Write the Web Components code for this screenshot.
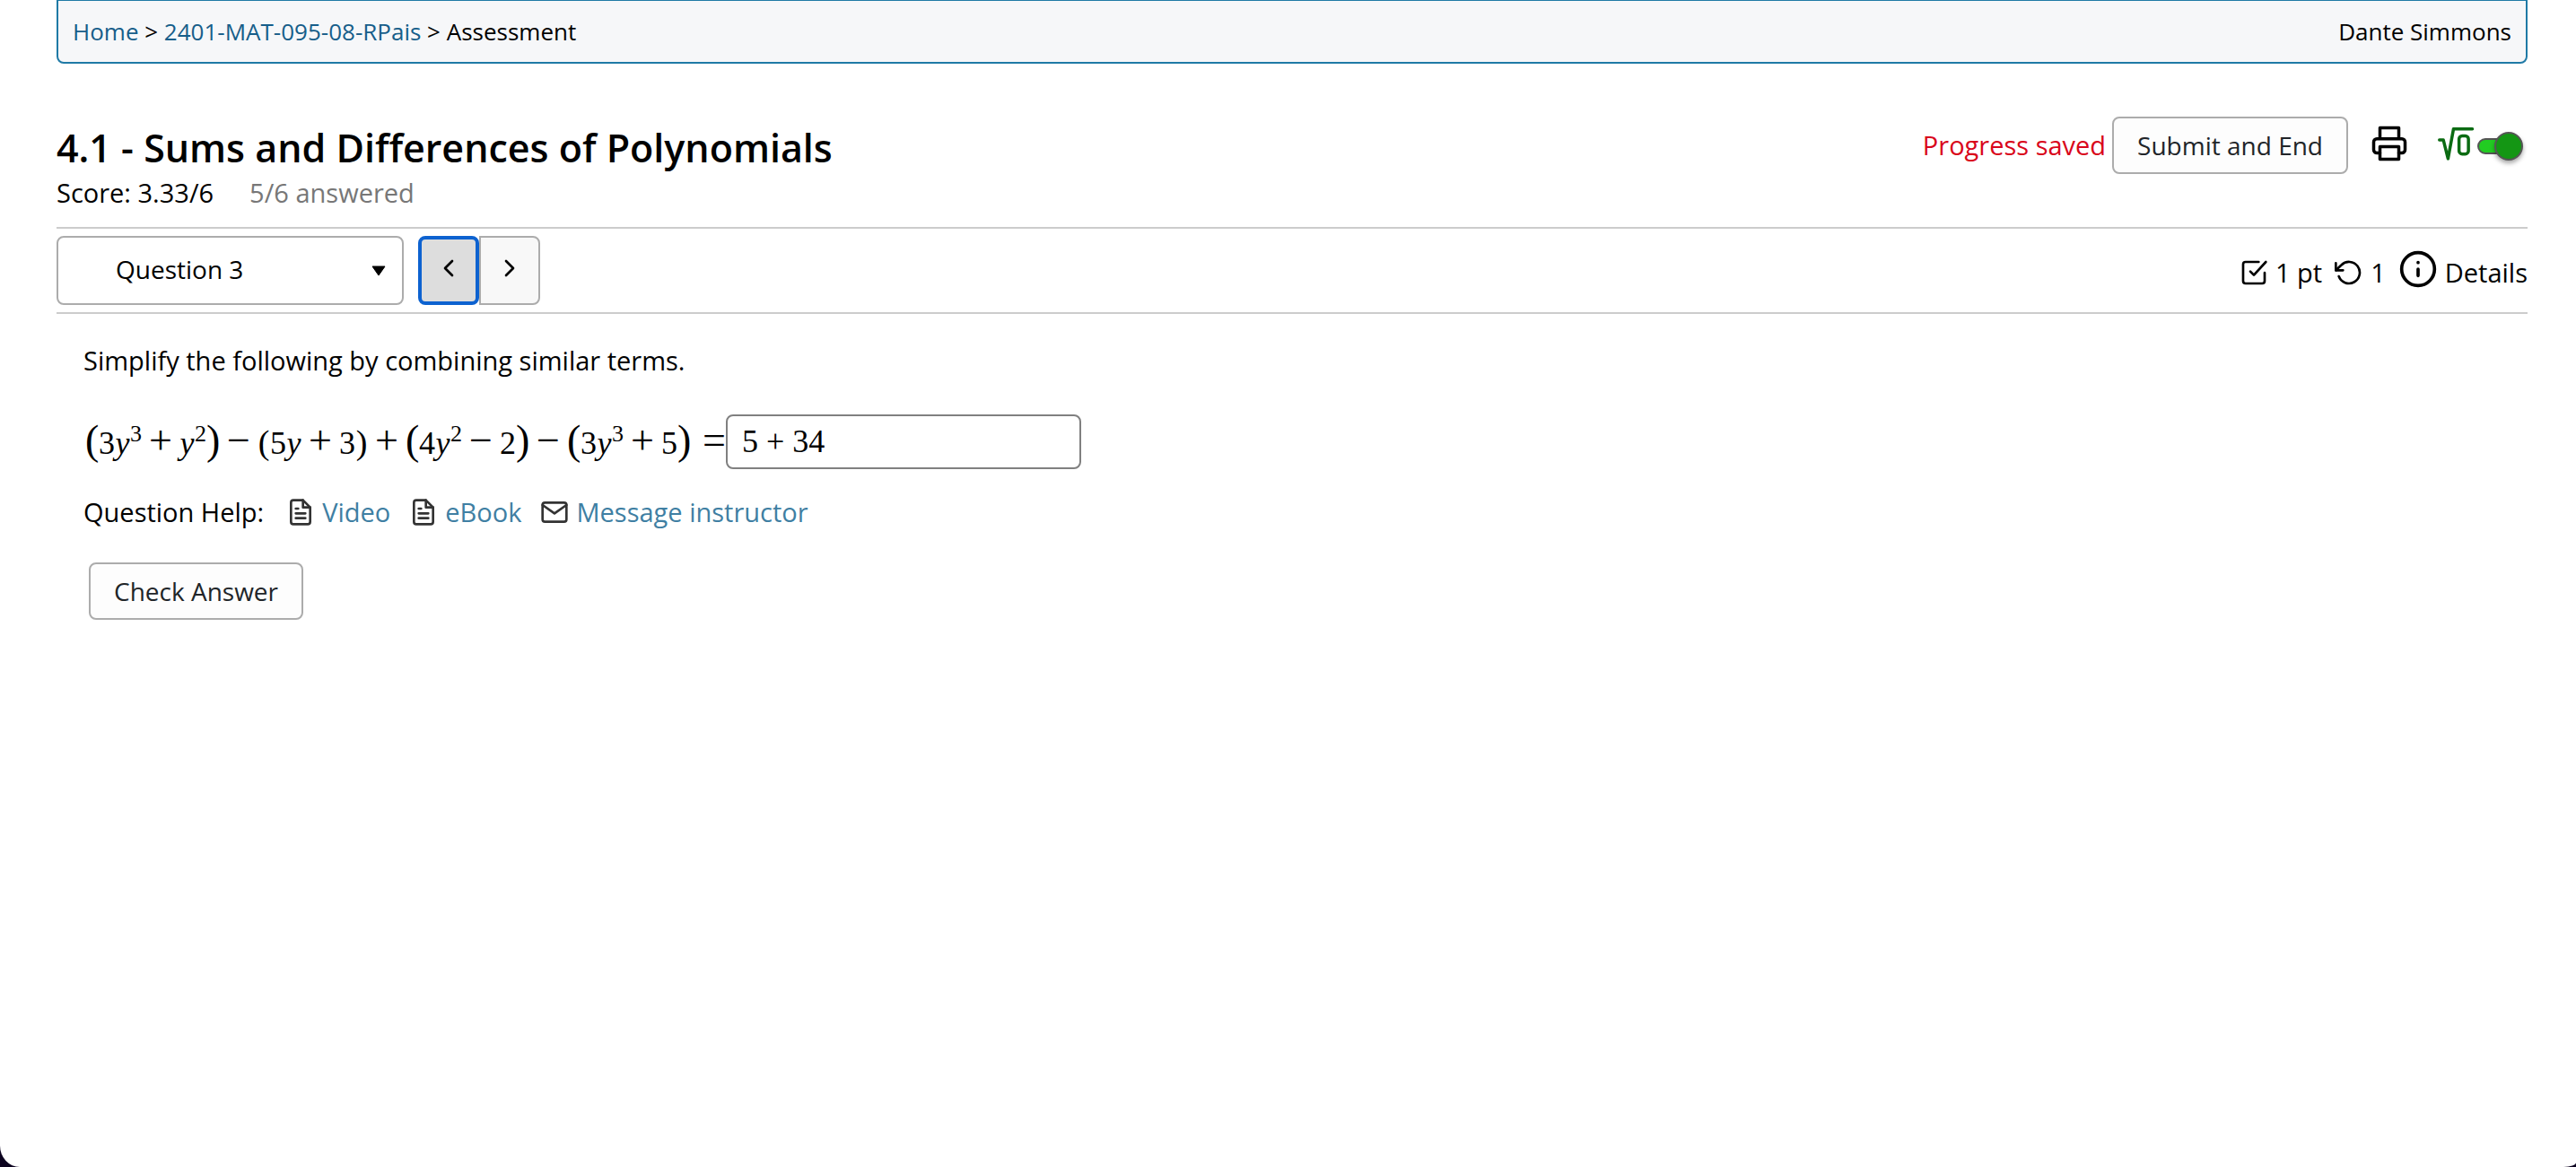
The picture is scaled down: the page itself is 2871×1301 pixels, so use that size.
<!DOCTYPE html>
<html lang="en">
<head>
<meta charset="utf-8">
<title>4.1 - Sums and Differences of Polynomials</title>
<style>
  html {
    background: #0d0420;
  }
  body {
    margin: 0;
    min-height: 100vh;
    box-sizing: border-box;
    padding: 0 54px 0 63px;
    background: #fff;
    border-radius: 0 0 14px 22px / 0 0 5px 24px;
    color: #000;
    font: 500 29px/40px "Open Sans", "Noto Sans", sans-serif;
  }
</style>
</head>
<body>
  <course-crumbs user="Dante Simmons">
    <a href="#home">Home</a> &gt; <a href="#course">2401-MAT-095-08-RPais</a> &gt; Assessment
  </course-crumbs>

  <assess-header>
    <span slot="title">4.1 - Sums and Differences of Polynomials</span>
    <span slot="score">Score: 3.33/6</span>
    <span slot="answered">5/6 answered</span>
    <span slot="status">Progress saved</span>
  </assess-header>

  <question-nav current="3" total="6"></question-nav>

  <question-panel>
    <span slot="prompt">Simplify the following by combining similar terms.</span>
    <math-line slot="math" expr="(3y^3+y^2)-(5y+3)+(4y^2-2)-(3y^3+5)="></math-line>
    <help-link slot="help" icon="file" href="#video">Video</help-link>
    <help-link slot="help" icon="file" href="#ebook">eBook</help-link>
    <help-link slot="help" icon="mail" href="#message">Message instructor</help-link>
  </question-panel>

<script>
const ICONS = {
  printer: '<path d="M6 9V2h12v7M6 18H4a2 2 0 0 1-2-2v-5a2 2 0 0 1 2-2h16a2 2 0 0 1 2 2v5a2 2 0 0 1-2 2h-2"/><path d="M6 14h12v8H6z"/>',
  check: '<path d="M9 11l3 3L22 3"/><path d="M21 12v7a2 2 0 0 1-2 2H5a2 2 0 0 1-2-2V5a2 2 0 0 1 2-2h11"/>',
  retry: '<path d="M1 4v6h6"/><path d="M3.5 15a9 9 0 1 0 2.1-9.4L1 10"/>',
  info: '<circle cx="12" cy="12" r="10"/><path d="M12 16v-4M12 8h.01"/>',
  file: '<path d="M14 2H6a2 2 0 0 0-2 2v16a2 2 0 0 0 2 2h12a2 2 0 0 0 2-2V8z"/><path d="M14 2v6h6M16 13H8M16 17H8M10 9H8"/>',
  mail: '<rect x="2" y="4" width="20" height="16" rx="2"/><path d="M22 6l-10 7L2 6"/>',
  left: '<path d="M15 18l-6-6 6-6"/>',
  right: '<path d="M9 18l6-6-6-6"/>',
  root: '<path d="M1 8.5h2.5l3 12 3.5-19h12"/><rect x="13.5" y="6" width="6" height="11.5" rx="2"/>'
};

class UiIcon extends HTMLElement {
  connectedCallback() {
    this.attachShadow({mode: 'open'});
    this.shadowRoot.innerHTML = `
    <style>
      :host {
        display: inline-flex;
        flex: none;
        width: var(--size, 32px);
        height: var(--size, 32px);
      }
      svg {
        width: 100%;
        height: 100%;
        fill: none;
        stroke: currentColor;
        stroke-width: 2;
        stroke-linecap: round;
        stroke-linejoin: round;
      }
    </style>
    <svg viewBox="0 0 24 24" aria-hidden="true">${ICONS[this.getAttribute('name')]}</svg>`;
  }
}

class UiButton extends HTMLElement {
  connectedCallback() {
    this.attachShadow({mode: 'open'});
    this.shadowRoot.innerHTML = `
    <style>
      :host {
        display: inline-flex;
      }
      button {
        height: 64px;
        padding: 0 26px;
        border: 2px solid #acacac;
        border-radius: 8px;
        background: #fdfdfd;
        color: #212529;
        font: inherit;
        font-size: 28px;
      }
    </style>
    <button type="button"><slot></slot></button>`;
  }
}

class CourseCrumbs extends HTMLElement {
  connectedCallback() {
    this.attachShadow({mode: 'open'});
    this.shadowRoot.innerHTML = `
    <style>
      :host {
        display: flex;
        justify-content: space-between;
        align-items: center;
        box-sizing: border-box;
        height: 71px;
        padding: 0 16px;
        border: 2px solid #1f7aa6;
        border-top-width: 1px;
        border-radius: 0 0 8px 8px;
        background: #f6f7f9;
        font-size: 26px;
      }
      ::slotted(a) {
        color: #165e8a;
        text-decoration: none;
      }
    </style>
    <nav><slot></slot></nav>
    <span>${this.getAttribute('user')}</span>`;
  }
}

class MathToggle extends HTMLElement {
  connectedCallback() {
    this.attachShadow({mode: 'open'});
    this.shadowRoot.innerHTML = `
    <style>
      :host {
        display: flex;
      }
      label {
        display: flex;
        align-items: center;
        color: #0b6b12;
      }
      ui-icon {
        --size: 42px;
      }
      input {
        appearance: none;
        display: flex;
        align-items: center;
        justify-content: flex-end;
        box-sizing: border-box;
        width: 50px;
        height: 18px;
        margin: 2px 6px 0 2px;
        border: 2px solid #555;
        border-radius: 9px;
        background: #22cc22;
      }
      input::before {
        content: "";
        flex: none;
        box-sizing: border-box;
        width: 32px;
        height: 32px;
        margin-right: -3px;
        border: 2px solid #555;
        border-radius: 50%;
        background: #149614;
        box-shadow: 0 3px 5px rgba(0, 0, 0, 0.35);
      }
    </style>
    <label>
      <ui-icon name="root"></ui-icon>
      <input type="checkbox" role="switch" aria-label="Equation editor" checked>
    </label>`;
  }
}

class AssessHeader extends HTMLElement {
  connectedCallback() {
    this.attachShadow({mode: 'open'});
    this.shadowRoot.innerHTML = `
    <style>
      :host {
        display: flex;
        justify-content: space-between;
        align-items: flex-start;
        padding: 59px 0 18px;
        border-bottom: 2px solid #ccc;
      }
      h1 {
        margin: 5px 0 0;
        font-size: 43px;
        font-weight: 600;
        line-height: 60px;
      }
      .score {
        display: flex;
        gap: 40px;
      }
      .answered {
        color: #777;
      }
      .tools {
        display: flex;
        align-items: center;
      }
      .status {
        margin-right: 7px;
        color: #d9061b;
      }
      .print {
        display: flex;
        margin: 0 33px 0 25px;
        padding: 0 0 4px;
        border: 0;
        background: none;
        color: #000;
        --size: 42px;
      }
    </style>
    <div>
      <h1><slot name="title"></slot></h1>
      <div class="score">
        <slot name="score"></slot>
        <span class="answered"><slot name="answered"></slot></span>
      </div>
    </div>
    <div class="tools">
      <span class="status"><slot name="status"></slot></span>
      <ui-button>Submit and End</ui-button>
      <button class="print" type="button" aria-label="Print"><ui-icon name="printer"></ui-icon></button>
      <math-toggle></math-toggle>
    </div>`;
  }
}

class QuestionNav extends HTMLElement {
  connectedCallback() {
    const current = Number(this.getAttribute('current'));
    const total = Number(this.getAttribute('total'));
    let options = '';
    for (let i = 1; i <= total; i++) {
      options += `<option${i === current ? ' selected' : ''}>Question ${i}</option>`;
    }
    this.attachShadow({mode: 'open'});
    this.shadowRoot.innerHTML = `
    <style>
      :host {
        display: flex;
        justify-content: space-between;
        align-items: center;
        padding: 8px 0;
        border-bottom: 2px solid #ccc;
      }
      .pager, .details, .item {
        display: flex;
        align-items: center;
      }
      .picker {
        display: grid;
        align-items: center;
        width: 387px;
        margin-right: 16px;
      }
      .picker > * {
        grid-area: 1 / 1;
      }
      select {
        appearance: none;
        width: 100%;
        height: 77px;
        padding: 0 64px 4px;
        border: 2px solid #acacac;
        border-radius: 8px;
        background: #fff;
        color: #000;
        font: inherit;
        font-size: 28px;
      }
      .arrow {
        justify-self: end;
        width: 16px;
        height: 12px;
        margin-right: 20px;
        pointer-events: none;
      }
      .pager button {
        display: flex;
        align-items: center;
        justify-content: center;
        width: 68px;
        height: 77px;
        padding: 0 0 6px;
        border: 2px solid #acacac;
        border-radius: 0 8px 8px 0;
        background: #f8f8f8;
        color: #000;
      }
      .pager .active {
        border: 4px solid #0d62d0;
        border-radius: 8px;
        background: #ddd;
      }
      .details {
        gap: 14px;
        margin-top: 4px;
      }
      .item {
        gap: 8px;
      }
      .info {
        padding: 0;
        border: 0;
        background: none;
        color: inherit;
        font: inherit;
      }
      .info ui-icon {
        --size: 44px;
        margin-top: -8px;
      }
    </style>
    <div class="pager">
      <div class="picker">
        <select aria-label="Question">${options}</select>
        <svg class="arrow" viewBox="0 0 16 12" aria-hidden="true"><path d="M1 1h14L8 11z" stroke="#000" stroke-linejoin="round"/></svg>
      </div>
      <button class="active" type="button" aria-label="Previous question"><ui-icon name="left"></ui-icon></button>
      <button type="button" aria-label="Next question"><ui-icon name="right"></ui-icon></button>
    </div>
    <div class="details">
      <span class="item"><ui-icon name="check"></ui-icon>1 pt</span>
      <span class="item"><ui-icon name="retry"></ui-icon>1</span>
      <button class="item info" type="button"><ui-icon name="info"></ui-icon>Details</button>
    </div>`;
  }
}

class MathLine extends HTMLElement {
  connectedCallback() {
    this.attachShadow({mode: 'open'});
    this.shadowRoot.innerHTML = `
    <style>
      :host {
        display: flex;
        align-items: baseline;
        padding-left: 2px;
        font: 400 36px/40px "Liberation Serif", serif;
        white-space: nowrap;
      }
      span {
        display: block;
        text-align: center;
      }
      .var {
        width: 17px;
        font-style: italic;
      }
      .sup {
        width: 13px;
        font-size: 26px;
        line-height: 28px;
        position: relative;
        top: -14px;
      }
      .op {
        width: 42px;
        font-size: 46px;
      }
      .rel {
        width: 39px;
        text-align: right;
      }
      .paren {
        width: 14px;
        font-size: 38px;
      }
      .big {
        width: 15px;
        font-size: 46px;
      }
    </style>
    ${this.tokens()}`;
  }

  // groups that hold an exponent get the taller parentheses
  tokens() {
    const expr = this.getAttribute('expr');
    let out = '';
    let big = '';
    for (let i = 0; i < expr.length; i++) {
      const c = expr[i];
      if (c === '(') {
        big = expr.slice(i, expr.indexOf(')', i)).includes('^') ? ' big' : '';
      }
      if (c === '(' || c === ')') out += `<span class="paren${big}">${c}</span>`;
      else if (c === '^') out += `<span class="sup">${expr[++i]}</span>`;
      else if (c === '+') out += '<span class="op">+</span>';
      else if (c === '-') out += '<span class="op">−</span>';
      else if (c === '=') out += '<span class="op rel">=</span>';
      else if (c === 'y') out += '<span class="var">y</span>';
      else out += `<span>${c}</span>`;
    }
    return out;
  }
}

class HelpLink extends HTMLElement {
  connectedCallback() {
    this.attachShadow({mode: 'open'});
    this.shadowRoot.innerHTML = `
    <style>
      :host {
        display: inline-flex;
      }
      a {
        display: flex;
        align-items: center;
        gap: 8px;
        color: #3f7fa3;
        text-decoration: none;
      }
      ui-icon {
        color: #333;
      }
    </style>
    <a href="${this.getAttribute('href')}"><ui-icon name="${this.getAttribute('icon')}"></ui-icon><slot></slot></a>`;
  }
}

class QuestionPanel extends HTMLElement {
  connectedCallback() {
    this.attachShadow({mode: 'open'});
    this.shadowRoot.innerHTML = `
    <style>
      :host {
        display: block;
        padding: 32px 30px;
      }
      p {
        margin: 0;
      }
      .row {
        display: flex;
        align-items: center;
        margin-top: 40px;
      }
      input {
        box-sizing: border-box;
        width: 396px;
        height: 61px;
        padding: 0 16px 2px;
        border: 2px solid #808080;
        border-radius: 8px;
        background: #fff;
        color: #000;
        font: 400 36px "Liberation Serif", serif;
      }
      .help {
        display: flex;
        align-items: center;
        gap: 21px;
        margin: 28px 0 36px;
      }
      .label {
        margin-right: 4px;
      }
      ui-button {
        margin-left: 6px;
      }
    </style>
    <p><slot name="prompt"></slot></p>
    <div class="row">
      <slot name="math"></slot>
      <input type="text" value="5 + 34" aria-label="Answer">
    </div>
    <div class="help">
      <span class="label">Question Help:</span>
      <slot name="help"></slot>
    </div>
    <ui-button>Check Answer</ui-button>`;
  }
}

customElements.define('ui-icon', UiIcon);
customElements.define('ui-button', UiButton);
customElements.define('math-toggle', MathToggle);
customElements.define('course-crumbs', CourseCrumbs);
customElements.define('assess-header', AssessHeader);
customElements.define('question-nav', QuestionNav);
customElements.define('math-line', MathLine);
customElements.define('help-link', HelpLink);
customElements.define('question-panel', QuestionPanel);
</script>
</body>
</html>
